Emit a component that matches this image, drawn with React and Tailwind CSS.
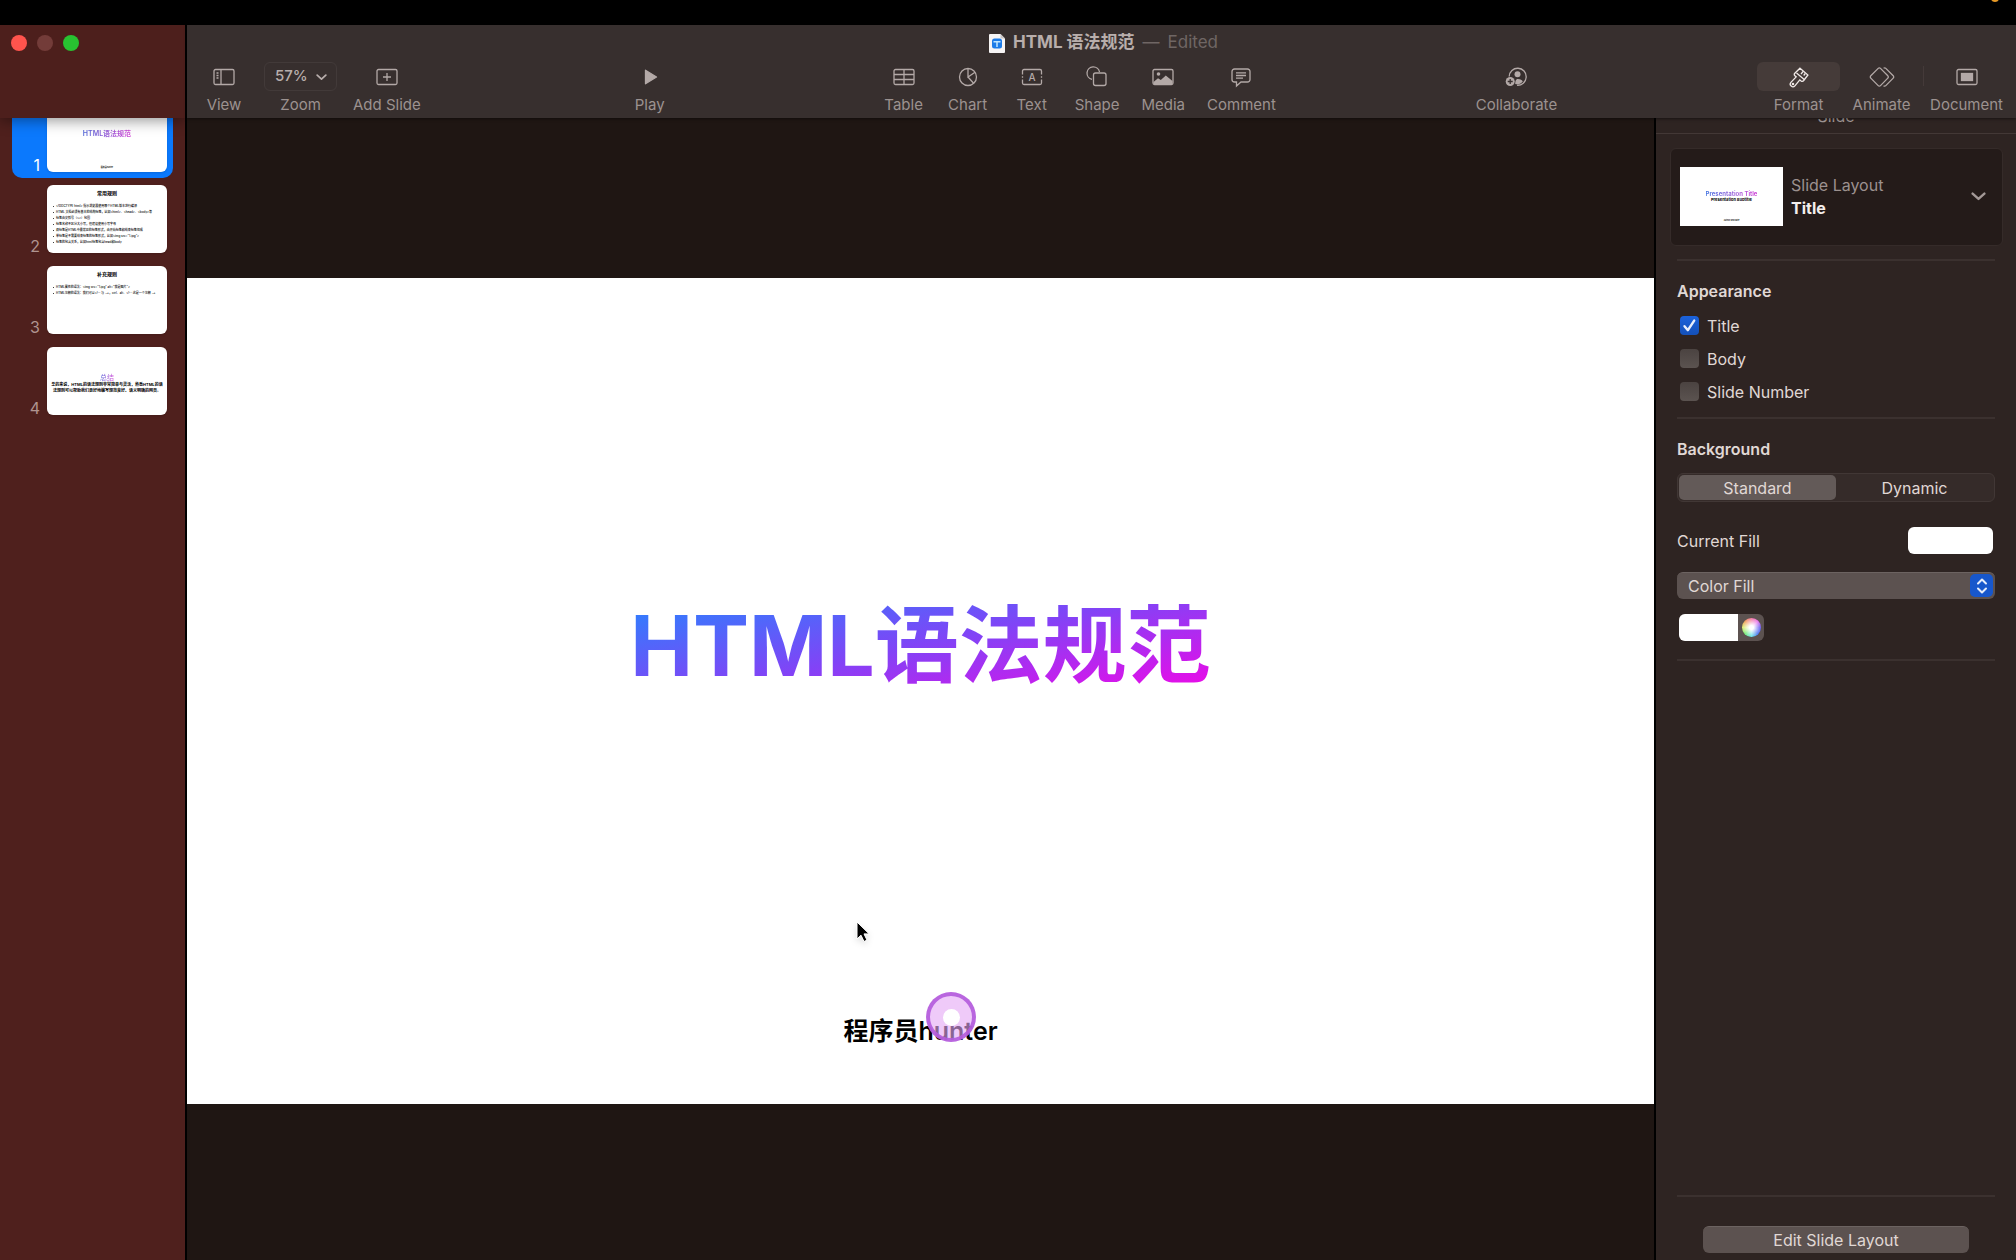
import { useState } from 'react';

const insertTools = ['Table', 'Chart', 'Text', 'Shape', 'Media', 'Comment'];

const rules = [
  '<!DOCTYPE html> 指示浏览器使用哪个HTML版本进行编译',
  'HTML 文档必须有基本的结构标签，比如<html>、<head>、<body>等',
  '标签由尖括号（<>）包围',
  '标签名称不区分大小写，但建议使用小写字母',
  '双标签是HTML中最常见的标签形式，由开始标签和结束标签组成',
  '单标签是不需要结束标签的标签形式，比如<img src="1.jpg">',
  '标签的包含关系，比如html标签包含head和body',
];

const extraRules = [
  'HTML属性的语法：<img src="1.jpg" alt="我是图片">',
  'HTML注释的语法：我们可以<!-- 与 -->，ctrl、alt、<!-- 这是一个注释 -->',
];

// Toolbar drawings, all on a 24px grid
const shapes = {
  View: (
    <>
      <rect x="2" y="4.5" width="20" height="15" rx="1.5" />
      <path d="M9 4.5v15M4.5 8h2M4.5 10.5h2M4.5 13h2" />
    </>
  ),
  'Add Slide': (
    <>
      <rect x="2" y="4.5" width="20" height="15" rx="1.5" />
      <path d="M12 8v8M8 12h8" />
    </>
  ),
  Play: <path d="M7.5 5.2v13.6L18.5 12z" fill="currentColor" strokeLinejoin="round" />,
  Table: (
    <>
      <rect x="2" y="4.5" width="20" height="15" rx="1.5" />
      <path d="M12 4.5v15M2 9.5h20M2 14.5h20" />
    </>
  ),
  Chart: (
    <>
      <circle cx="12" cy="12" r="8.5" />
      <path d="M12 3.5V12l7-4.8M12 12l5.6 6.2" />
    </>
  ),
  Text: (
    <>
      <path d="M2.5 9.5V6A1.5 1.5 0 0 1 4 4.5h16A1.5 1.5 0 0 1 21.5 6v3.5M2.5 14.5V18A1.5 1.5 0 0 0 4 19.5h16a1.5 1.5 0 0 0 1.5-1.5v-3.5M2.5 11.3v1.4M21.5 11.3v1.4" />
      <text x="12" y="15.8" textAnchor="middle" fontSize="10" fill="currentColor" stroke="none" className="font-medium">A</text>
    </>
  ),
  Shape: (
    <>
      <path d="M7 14.3A6.3 6.3 0 1 1 14.5 7" />
      <rect x="8.5" y="8" width="12.5" height="12.5" rx="2" />
    </>
  ),
  Media: (
    <>
      <rect x="2" y="4.5" width="20" height="15" rx="1.5" />
      <circle cx="7.5" cy="9" r="1.8" fill="currentColor" stroke="none" />
      <path d="M2.5 17l4.5-3.8 2.8 1.9 5-4.6 6.7 5.5v3h-19z" fill="currentColor" stroke="none" />
    </>
  ),
  Comment: (
    <>
      <path d="M5.5 4h13A2.5 2.5 0 0 1 21 6.5v8a2.5 2.5 0 0 1-2.5 2.5H12l-4.5 4V17h-2A2.5 2.5 0 0 1 3 14.5v-8A2.5 2.5 0 0 1 5.5 4z" />
      <path d="M7 7.8h10M7 10.5h10M7 13.2h7" />
    </>
  ),
  Collaborate: (
    <>
      <path d="M5.2 11.5A8.5 8.5 0 1 1 13 20.2" />
      <circle cx="13.5" cy="9.3" r="3" fill="currentColor" stroke="none" />
      <path d="M11.2 18.9c.2-2.6.5-4.9 2.7-4.9 2.5 0 4.3 1 4.9 2.6-1.6 2.2-4.3 3.3-7.6 2.3z" fill="currentColor" stroke="none" />
      <circle cx="6.2" cy="16.5" r="4.5" fill="currentColor" stroke="none" />
      <path d="M6.2 14v5M3.7 16.5h5" stroke="#372f2e" />
    </>
  ),
  Format: (
    <>
      <path d="M13 3.2l7.9 6.8-4.2 5.5c-.8 1-1.7 1.1-2.6.4l-1.3-1.1-4.9 6a2.6 2.6 0 0 1-4-3.4l5.3-5.5-1.3-1.1c-.8-.7-.9-1.7-.1-2.5z" />
      <path d="M9.5 7.9l8 6.8M16 6.5l-2 2.6M18.3 8.5l-1.6 2" />
      <circle cx="6" cy="19" r=".6" />
    </>
  ),
  Animate: (
    <>
      <path d="M8.2 3.4a1.6 1.6 0 0 1 2.3 0l7.3 7.4a1.6 1.6 0 0 1 0 2.3l-7.3 7.5a1.6 1.6 0 0 1-2.3 0L.8 13.1a1.6 1.6 0 0 1 0-2.3z" />
      <path d="M13.6 3.3a1.6 1.6 0 0 1 2.2.1l7.4 7.4a1.6 1.6 0 0 1 0 2.3l-7.4 7.5a1.6 1.6 0 0 1-2.2.1" />
    </>
  ),
  Document: (
    <>
      <rect x="2" y="4.5" width="20" height="15" rx="1.5" />
      <rect x="6.5" y="8.5" width="11" height="7" fill="currentColor" />
    </>
  ),
};

const Icon = ({ name }) => (
  <svg viewBox="0 0 24 24" className="size-6 overflow-visible" fill="none" stroke="currentColor" strokeWidth="1.3" aria-hidden="true">
    {shapes[name]}
  </svg>
);

const Chevron = ({ className }) => (
  <svg viewBox="0 0 14 8" className={className} fill="none" stroke="currentColor" strokeWidth="2.2" strokeLinecap="round" strokeLinejoin="round" aria-hidden="true">
    <path d="M1.5 1.5L7 6.5l5.5-5" />
  </svg>
);

const Tool = ({ name, wide, active, onClick }) => (
  <button type="button" onClick={onClick} className={`flex flex-col items-center gap-1 ${wide ? 'w-[83px]' : 'min-w-[42px]'}`}>
    <span className={`flex h-[29px] items-center justify-center ${wide ? 'w-full rounded-md' : ''} ${active ? 'bg-[#453b39] text-[#f0e9e7]' : 'text-[#b3a9a7]'}`}>
      <Icon name={name} />
    </span>
    <span className="leading-5">{name}</span>
  </button>
);

const SlideItem = ({ number, selected, onClick, children }) => (
  <li>
    <button
      type="button"
      onClick={onClick}
      className={`flex w-full items-end justify-end gap-[7px] rounded-[10px] p-1.5 ${selected ? 'bg-[#0b79fd] text-white' : 'text-[#b09490]'}`}
    >
      <span className="text-base leading-[14px]">{number}</span>
      <span className="block h-[68px] w-[120px] overflow-hidden rounded-md bg-white text-black shadow">{children}</span>
    </button>
  </li>
);

const BulletSlide = ({ title, items }) => (
  <span className="block pt-[5px]">
    <span className="block text-center text-[5px] leading-[6px] font-bold">{title}</span>
    <span className="mt-[7px] block pl-[6px] text-left text-[3px] leading-[6px] font-medium whitespace-nowrap">
      {items.map((item) => (
        <span key={item} className="flex items-center gap-[2px]">
          <span className="size-px rounded-full bg-black" />
          <span>{item}</span>
        </span>
      ))}
    </span>
  </span>
);

const Divider = () => <hr className="border-t-2 border-[#3b312f]" />;

const CheckRow = ({ label, defaultChecked }) => (
  <label className="flex h-[33px] items-center gap-2 pl-[3px]">
    <span className="relative flex size-[19px]">
      <input
        type="checkbox"
        defaultChecked={defaultChecked}
        className="peer size-[19px] appearance-none rounded bg-linear-to-b from-[#4b4341] to-[#5b5350] checked:from-[#1b62dc] checked:to-[#1450b8]"
      />
      <svg viewBox="0 0 19 19" className="pointer-events-none absolute inset-0 hidden peer-checked:block" fill="none" stroke="#e8eefb" strokeWidth="2.4" strokeLinecap="round" strokeLinejoin="round">
        <path d="M4.5 10.2l3.4 4L14.2 4.6" />
      </svg>
    </span>
    {label}
  </label>
);

const App = () => {
  const [current, setCurrent] = useState(1);
  const [panel, setPanel] = useState('Format');
  const [fillMode, setFillMode] = useState('Standard');

  return (
    <div className="flex h-screen flex-col overflow-hidden bg-black font-['Inter','Noto_Sans_CJK_SC',sans-serif] text-base text-[#e0d8d5]">
      <div className="flex h-[25px] shrink-0 justify-end overflow-hidden pr-[17px]">
        <span className="-mt-1.5 size-2 rounded-full bg-[#e89a26]" />
      </div>

      <div className="flex min-h-0 flex-1 gap-[2px]">
        {/* Slide navigator */}
        <aside className="flex w-[185px] shrink-0 flex-col overflow-hidden bg-[#4f201d]">
          <div className="relative z-10 flex h-[93px] shrink-0 gap-[10px] bg-[#4d1f1c] pt-[10px] pl-[11px] shadow-[0_2px_14px_rgba(0,0,0,0.45)]">
            <button type="button" aria-label="Close" className="size-4 rounded-full bg-[#ff544d]" />
            <button type="button" aria-label="Minimize" className="size-4 rounded-full bg-[#733c39]" />
            <button type="button" aria-label="Full screen" className="size-4 rounded-full bg-[#28c231]" />
          </div>
          <ol className="-mt-5 flex flex-col gap-px px-3">
            <SlideItem number={1} selected={current === 1} onClick={() => setCurrent(1)}>
              <span className="flex h-full flex-col items-center justify-between pt-[25px] pb-[2px]">
                <span className="bg-linear-to-r from-[#4a63d8] to-[#cf3fd6] bg-clip-text text-[7px] leading-[10px] font-semibold text-transparent">HTML语法规范</span>
                <span className="text-[2px] leading-[6px] font-semibold">程序员hunter</span>
              </span>
            </SlideItem>
            <SlideItem number={2} selected={current === 2} onClick={() => setCurrent(2)}>
              <BulletSlide title="常用规则" items={rules} />
            </SlideItem>
            <SlideItem number={3} selected={current === 3} onClick={() => setCurrent(3)}>
              <BulletSlide title="补充规则" items={extraRules} />
            </SlideItem>
            <SlideItem number={4} selected={current === 4} onClick={() => setCurrent(4)}>
              <span className="flex flex-col items-center pt-[26px]">
                <span className="bg-linear-to-r from-[#4a63d8] to-[#cf3fd6] bg-clip-text text-[7px] leading-[9px] text-transparent">总结</span>
                <span className="text-center text-[4px] leading-[6px] font-bold whitespace-nowrap">
                  总的来说，HTML的语法规则非常简单与灵活，熟悉HTML的语
                  <br />
                  法规则可以帮助我们更好地编写规范良好、语义明确的网页。
                </span>
              </span>
            </SlideItem>
          </ol>
        </aside>

        <div className="flex min-w-0 flex-1 flex-col">
          <header className="relative z-10 shrink-0 bg-[#372f2e] text-[#9c9290] shadow-[0_1px_3px_rgba(0,0,0,0.5)]">
            <div className="flex h-9 items-center justify-center gap-2 pl-1 text-[17px]">
              <svg viewBox="0 0 16 19" className="h-[19px] w-4" aria-hidden="true">
                <path d="M1 0h10.500L16 4.500V18a1 1 0 0 1-1 1H1a1 1 0 0 1-1-1V1a1 1 0 0 1 1-1z" fill="#f6f4f4" />
                <path d="M11.500 0v4.500H16z" fill="#c9c5c5" />
                <rect x="3" y="4.500" width="10" height="10" rx="2.500" fill="#1c7be8" />
                <path d="M4.500 7.800h7M8 8v5" stroke="#bfe6ff" strokeWidth="1.500" />
              </svg>
              <h1 className="font-bold text-[#b8aeac]">HTML 语法规范</h1>
              <span className="text-[#6f6664]">—</span>
              <span className="text-[#6f6664]">Edited</span>
            </div>

            <div className="flex justify-between pt-px pr-[13px] pb-[3px] pl-[13px] text-[15px]">
              <div className="flex gap-4">
                <div className="flex w-12 justify-center">
                  <Tool name="View" />
                </div>
                <div className="flex flex-col items-center gap-1">
                  <div className="relative">
                    <select id="zoom" defaultValue="57%" className="block h-[29px] w-[73px] appearance-none rounded-md border border-[#423a39] pl-[10px] font-medium text-[#b8aeac]">
                      <option>57%</option>
                      <option>100%</option>
                    </select>
                    <Chevron className="pointer-events-none absolute top-[12px] right-[10px] w-[11px] text-[#b8aeac]" />
                  </div>
                  <label htmlFor="zoom" className="leading-5">Zoom</label>
                </div>
                <Tool name="Add Slide" />
              </div>

              <div className="ml-2 flex">
                <Tool name="Play" />
              </div>

              <div className="ml-3 flex gap-[22px]">
                {insertTools.map((name) => (
                  <Tool key={name} name={name} />
                ))}
              </div>

              <Tool name="Collaborate" />

              <div className="flex">
                <Tool name="Format" wide active={panel === 'Format'} onClick={() => setPanel('Format')} />
                <Tool name="Animate" wide active={panel === 'Animate'} onClick={() => setPanel('Animate')} />
                <span className="mt-1 mr-1.5 h-5 w-px bg-[#443a39]" />
                <Tool name="Document" active={panel === 'Document'} onClick={() => setPanel('Document')} />
              </div>
            </div>
          </header>

          <div className="flex min-h-0 flex-1 gap-[2px]">
            {/* Canvas */}
            <main className="flex min-w-0 flex-1 flex-col justify-center bg-[#1f1613] pt-1">
              <div className="relative flex aspect-video flex-col items-center justify-between bg-white pt-[21%] pb-[3.7%] text-black">
                <h2 className="bg-linear-to-br/srgb from-[#1c8cff] via-[#8243f6] to-[#ff00e5] bg-clip-text text-[84px] leading-[120px] font-bold text-transparent">HTML语法规范</h2>
                <p className="text-[25px] leading-9 font-semibold">程序员hunter</p>
                <span className="absolute top-[86.5%] left-[50.4%] flex size-[50px] items-center justify-center rounded-full border-4 border-[#b45bdd]/90 bg-[#e4a6f5]/60">
                  <span className="size-[17px] rounded-full bg-white" />
                </span>
                <svg viewBox="0 0 14 22" className="absolute top-[77.9%] left-[45.6%] h-[22px] w-[14px] overflow-visible drop-shadow-md" aria-hidden="true">
                  <path d="M1 1v17l4-3.8 3 6.3 3-1.400-3-6.200h5.200z" fill="#000" stroke="#fff" strokeWidth="1" />
                </svg>
              </div>
            </main>

            {/* Inspector */}
            <aside className="flex w-[360px] shrink-0 flex-col overflow-hidden bg-[#2e2422]">
              <h2 className="-mt-[14px] border-b border-[#433836] pb-[5px] text-center leading-6 text-[#a39997]">Slide</h2>
              <div className="mt-[14px] pr-[13px] pl-[14px]">
                <button type="button" className="flex w-full items-center gap-2 rounded-md border border-[#352b29] bg-[#241b19] px-[9px] pt-[18px] pb-[19px] text-left">
                  <span className="flex h-[59px] w-[103px] shrink-0 flex-col items-center bg-white pt-[23px] text-black">
                    <span className="bg-linear-to-r from-[#3f72e0] to-[#cf3fd6] bg-clip-text text-[6px] leading-[7px] font-bold text-transparent">Presentation Title</span>
                    <span className="text-[4px] leading-[5px] font-bold">Presentation Subtitle</span>
                    <span className="mt-[17px] text-[2px] leading-[3px] font-semibold">Author and Date</span>
                  </span>
                  <span className="flex flex-1 flex-col leading-[23px]">
                    <span className="text-[#9c918f]">Slide Layout</span>
                    <span className="font-bold text-[#f3eeec]">Title</span>
                  </span>
                  <Chevron className="mr-[7px] w-[15px] text-[#a39997]" />
                </button>
              </div>

              <div className="flex flex-1 flex-col px-[21px] pt-[13px] pb-[7px]">
                <Divider />
                <h3 className="mt-[18px] mb-[6px] leading-6 font-semibold">Appearance</h3>
                <CheckRow label="Title" defaultChecked />
                <CheckRow label="Body" />
                <CheckRow label="Slide Number" />
                <div className="mt-[9px]">
                  <Divider />
                </div>
                <h3 className="mt-[18px] leading-6 font-semibold">Background</h3>
                <div className="mt-3 flex h-[29px] rounded-md border border-[#413735] bg-[#352b29] p-px">
                  {['Standard', 'Dynamic'].map((mode) => (
                    <button
                      key={mode}
                      type="button"
                      onClick={() => setFillMode(mode)}
                      className={`flex-1 rounded-[5px] leading-6 ${fillMode === mode ? 'bg-[#635a58]' : ''}`}
                    >
                      {mode}
                    </button>
                  ))}
                </div>
                <div className="mt-[25px] flex items-center justify-between pr-[2px]">
                  <span>Current Fill</span>
                  <button type="button" aria-label="Current Fill" className="h-[27px] w-[85px] rounded-md bg-white" />
                </div>
                <div className="relative mt-[18px]">
                  <select aria-label="Fill type" className="block h-[27px] w-full appearance-none rounded-md border-t border-[#6c6361] bg-[#5c5250] pl-[11px] leading-6">
                    <option>Color Fill</option>
                    <option>Gradient Fill</option>
                  </select>
                  <span className="pointer-events-none absolute top-[2px] right-[2px] flex h-[23px] w-[23px] items-center justify-center rounded-[5px] bg-[#1757cc]">
                    <svg viewBox="0 0 12 16" className="h-4 w-3" fill="none" stroke="#e6edfb" strokeWidth="2" strokeLinecap="round" strokeLinejoin="round" aria-hidden="true">
                      <path d="M2 5.5l4-4 4 4M2 10.5l4 4 4-4" />
                    </svg>
                  </span>
                </div>
                <div className="mt-[15px] mb-[18px] ml-[2px] flex h-[27px] w-[85px] overflow-hidden rounded-md bg-[#5c5250]">
                  <button type="button" aria-label="Fill color" className="w-[59px] bg-white" />
                  <button type="button" aria-label="Color wheel" className="flex flex-1 items-center justify-center">
                    <span className="flex size-[19px] rounded-full bg-[conic-gradient(from_0deg,#f26a9a,#e86ae8,#5c50f0,#3a6cf0,#5ce0e8,#66e86a,#d8e860,#f09048,#f26a9a)]">
                      <span className="size-full rounded-full bg-radial from-white from-15% to-transparent to-75%" />
                    </span>
                  </button>
                </div>
                <Divider />

                <div className="mt-auto">
                  <Divider />
                </div>
                <button type="button" className="mx-[26px] mt-[29px] h-[27px] rounded-md border-t border-[#6c6361] bg-[#5c5250] leading-6">
                  Edit Slide Layout
                </button>
              </div>
            </aside>
          </div>
        </div>
      </div>
    </div>
  );
};

export default App;
